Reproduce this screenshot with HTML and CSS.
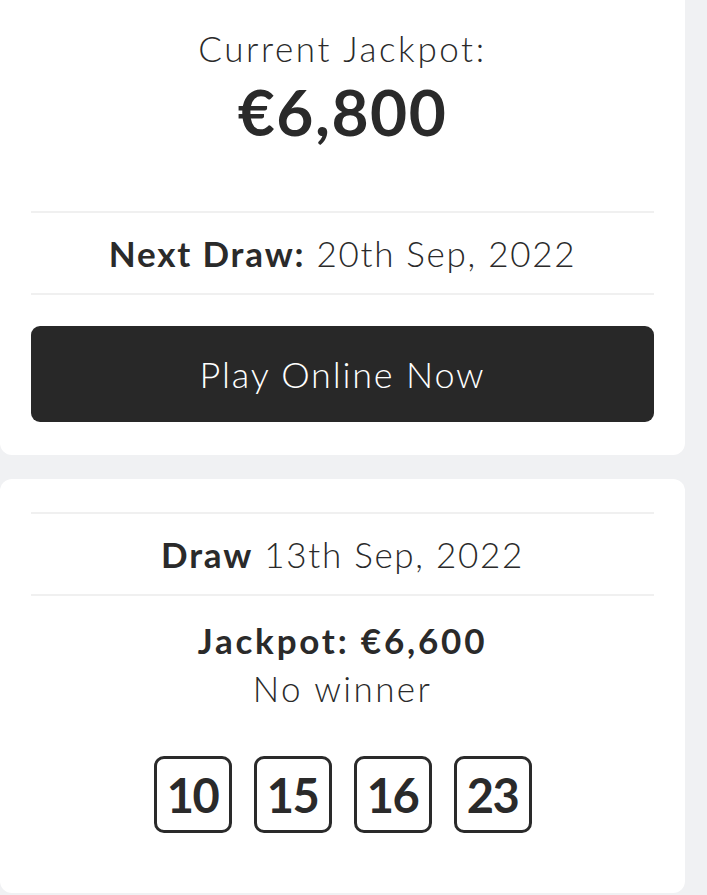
FILE: index.html
```html
<!DOCTYPE html>
<html>
<head>
<meta charset="utf-8">
<link rel="stylesheet" href="styles.css">
</head>
<body>
<div class="page">
  <section class="card card-top">
    <div class="label">Current Jackpot:</div>
    <div class="amount">€6,800</div>
    <div class="row row-next"><b>Next Draw:</b> 20th Sep, 2022</div>
    <div class="btn">Play Online Now</div>
  </section>
  <section class="card card-draw">
    <div class="row"><b>Draw</b> 13th Sep, 2022</div>
    <div class="jackpot">Jackpot: €6,600</div>
    <div class="winner">No winner</div>
    <div class="balls">
      <span class="ball">10</span>
      <span class="ball">15</span>
      <span class="ball">16</span>
      <span class="ball">23</span>
    </div>
  </section>
</div>
</body>
</html>
```

FILE: styles.css
```css
html, body {
  margin: 0;
  padding: 0;
  background: #f0f1f3;
}
body {
  font-family: "Lato", "Noto Sans", sans-serif;
  color: #2a2a2a;
}
.page {
  width: 685px;
  display: flex;
  flex-direction: column;
  gap: 24px;
}
.card {
  background: #fff;
  border-radius: 12px;
  padding: 0 31px;
  text-align: center;
}
.card-top {
  border-radius: 0 0 12px 12px;
  padding-top: 26px;
  padding-bottom: 33px;
}
.label {
  font-size: 35px;
  font-weight: 300;
  line-height: 44px;
  letter-spacing: 2.6px;
}
.amount {
  font-size: 64px;
  font-weight: 700;
  line-height: 70px;
  margin-top: 7px;
  letter-spacing: 1.5px;
}
.row {
  border-top: 2px solid #f0f0f0;
  border-bottom: 2px solid #f0f0f0;
  font-size: 35px;
  font-weight: 300;
  line-height: 44px;
  padding: 18px 0;
  letter-spacing: 1.7px;
}
.row b {
  font-weight: 700;
  letter-spacing: 1.8px;
}
.row-next {
  margin-top: 64px;
}
.btn {
  margin-top: 31px;
  height: 96px;
  background: #282828;
  color: #fff;
  border-radius: 9px;
  font-size: 36px;
  font-weight: 300;
  letter-spacing: 1.8px;
  display: flex;
  align-items: center;
  justify-content: center;
}
.card-draw {
  padding-top: 33px;
  padding-bottom: 60px;
}
.jackpot {
  margin-top: 22px;
  font-size: 35px;
  font-weight: 700;
  line-height: 44px;
  letter-spacing: 2.8px;
}
.winner {
  margin-top: 4px;
  font-size: 35px;
  font-weight: 300;
  line-height: 44px;
  letter-spacing: 2.4px;
}
.balls {
  margin-top: 46px;
  display: flex;
  justify-content: center;
  gap: 22px;
}
.ball {
  box-sizing: border-box;
  width: 78px;
  height: 77px;
  border: 3px solid #2a2a2a;
  border-radius: 10px;
  font-size: 47px;
  font-weight: 700;
  display: flex;
  align-items: center;
  justify-content: center;
  letter-spacing: -1.5px;
}
```
